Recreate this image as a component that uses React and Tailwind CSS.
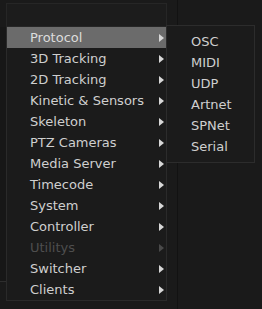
import React from 'react';

const items = [
  { label: 'Protocol', active: true },
  { label: '3D Tracking' },
  { label: '2D Tracking' },
  { label: 'Kinetic & Sensors' },
  { label: 'Skeleton' },
  { label: 'PTZ Cameras' },
  { label: 'Media Server' },
  { label: 'Timecode' },
  { label: 'System' },
  { label: 'Controller' },
  { label: 'Utilitys', disabled: true },
  { label: 'Switcher' },
  { label: 'Clients' },
];

const subItems = ['OSC', 'MIDI', 'UDP', 'Artnet', 'SPNet', 'Serial'];

const Arrow = ({ dim }) => (
  <span
    className={`w-0 h-0 border-y-[4px] border-y-transparent border-l-[5px] ${
      dim ? 'border-l-[#4a4a4a]' : 'border-l-[#d8d8d8]'
    }`}
  />
);

const App = () => {
  return (
    <div
      className="relative w-[262px] h-[309px] overflow-hidden bg-[#1a1a1a] text-[13px]"
      style={{ fontFamily: '"DejaVu Sans", Verdana, sans-serif' }}
    >
      {/* background panels */}
      <div className="flex h-full">
        <div className="w-[178px] h-full border-r border-[#121212] flex flex-col">
          <div className="mt-[3px] ml-[6px] w-[161px] h-[24px] border border-[#262626] bg-[#1c1c1c]" />
          <div className="flex-1 flex">
            <div className="w-[6px] flex flex-col">
              <div className="h-[254px] bg-[#171717]" />
              <div className="h-px bg-[#2e2e2e]" />
            </div>
            <div className="flex-1" />
          </div>
        </div>
        <div className="flex-1" />
      </div>

      {/* main menu */}
      <div className="absolute left-[6px] top-[27px] w-[161px] bg-[#1b1b1b] border-x border-b border-[#2a2a2a] flex flex-col">
        {items.map((it) => (
          <div
            key={it.label}
            className={`h-[21px] flex items-center justify-between pl-[23px] pr-[2px] ${
              it.active ? 'bg-[#6b6b6b] text-[#dcdcdc]' : it.disabled ? 'text-[#4e4e4e]' : 'text-[#cfcfcf]'
            }`}
          >
            <span>{it.label}</span>
            <Arrow dim={it.disabled} />
          </div>
        ))}
      </div>

      {/* submenu */}
      <div className="absolute left-[166px] top-[25px] w-[89px] py-[5px] bg-[#1b1b1b] border border-[#2c2c2c] flex flex-col">
        {subItems.map((s) => (
          <div key={s} className="h-[21px] flex items-center pl-[24px] text-[#cfcfcf]">
            {s}
          </div>
        ))}
      </div>
    </div>
  );
};

export default App;
